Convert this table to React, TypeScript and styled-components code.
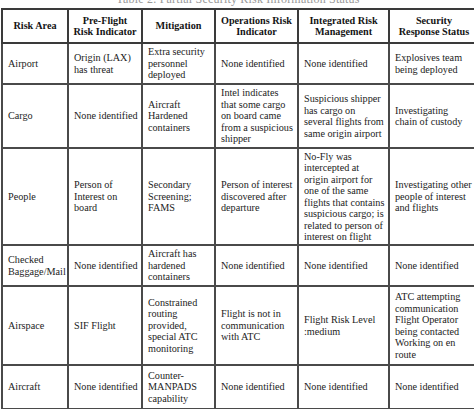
import React from 'react';
import styled, { createGlobalStyle } from 'styled-components';

const GlobalStyle = createGlobalStyle`
	html, body {
		margin: 0;
		padding: 0;
		background: #ffffff;
	}
	body {
		width: 474px;
		height: 409px;
		overflow: hidden;
		font-family: "Liberation Serif", "Times New Roman", serif;
		color: #1c1c1c;
	}
`;

interface Row {
	height: number;
	cells: string[][];
}

const headers: string[][] = [
	['Risk Area'],
	['Pre-Flight', 'Risk Indicator'],
	['Mitigation'],
	['Operations Risk', 'Indicator'],
	['Integrated Risk', 'Management'],
	['Security', 'Response Status'],
];

const widths = [66, 74, 73, 83, 91, 90];

const rows: Row[] = [
	{
		height: 41,
		cells: [
			['Airport'],
			['Origin (LAX)', 'has threat'],
			['Extra security', 'personnel', 'deployed'],
			['None identified'],
			['None identified'],
			['Explosives team', 'being deployed'],
		],
	},
	{
		height: 64,
		cells: [
			['Cargo'],
			['None identified'],
			['Aircraft', 'Hardened', 'containers'],
			['Intel indicates', 'that some cargo', 'on board came', 'from a suspicious', 'shipper'],
			['Suspicious shipper', 'has cargo on', 'several flights from', 'same origin airport'],
			['Investigating', 'chain of custody'],
		],
	},
	{
		height: 97,
		cells: [
			['People'],
			['Person of', 'Interest on', 'board'],
			['Secondary', 'Screening;', 'FAMS'],
			['Person of interest', 'discovered after', 'departure'],
			[
				'No-Fly was',
				'intercepted at',
				'origin airport for',
				'one of the same',
				'flights that contains',
				'suspicious cargo; is',
				'related to person of',
				'interest on flight',
			],
			['Investigating other', 'people of interest', 'and flights'],
		],
	},
	{
		height: 41,
		cells: [
			['Checked', 'Baggage/Mail'],
			['None identified'],
			['Aircraft has', 'hardened', 'containers'],
			['None identified'],
			['None identified'],
			['None identified'],
		],
	},
	{
		height: 79,
		cells: [
			['Airspace'],
			['SIF Flight'],
			['Constrained', 'routing', 'provided,', 'special ATC', 'monitoring'],
			['Flight is not in', 'communication', 'with ATC'],
			['Flight Risk Level', ':medium'],
			[
				'ATC attempting',
				'communication',
				'Flight Operator',
				'being contacted',
				'Working on en',
				'route',
			],
		],
	},
	{
		height: 44,
		cells: [
			['Aircraft'],
			['None identified'],
			['Counter-', 'MANPADS', 'capability'],
			['None identified'],
			['None identified'],
			['None identified'],
		],
	},
];

function Lines({ lines }: { lines: string[] }) {
	return (
		<>
			{ lines.map((line, i) => (
				<React.Fragment key={ i }>
					{ i > 0 && <br /> }
					{ line }
				</React.Fragment>
			)) }
		</>
	);
}

function App() {
	return (
		<>
			<GlobalStyle />
			<Page>
				<Caption>Table 2. Partial Security Risk Information Status</Caption>
				<Table>
					<colgroup>
						{ widths.map((w, i) => <col key={ i } style={ { width: w } } />) }
					</colgroup>
					<thead>
						<tr>
							{ headers.map((h, i) => (
								<HeadCell key={ i }>
									<Lines lines={ h } />
								</HeadCell>
							)) }
						</tr>
					</thead>
					<tbody>
						{ rows.map((row, r) => (
							<BodyRow key={ r } $height={ row.height }>
								{ row.cells.map((cell, c) => (
									<Cell key={ c }>
										<Lines lines={ cell } />
									</Cell>
								)) }
							</BodyRow>
						)) }
					</tbody>
				</Table>
			</Page>
		</>
	);
}

const Page = styled.div`
	padding-left: 1px;
	width: 490px;
`;

const Caption = styled.div`
	margin-top: -7px;
	height: 15px;
	width: 474px;
	text-align: center;
	font-size: 12px;
	line-height: 12px;
	color: #9a9a9a;
	letter-spacing: 0.2px;
`;

const Table = styled.table`
	border-collapse: collapse;
	table-layout: fixed;
	width: 477px;
	font-size: 10.2px;
	line-height: 11.5px;
`;

const HeadCell = styled.th`
	height: 32px;
	padding: 0 2px;
	border: 2px solid #3a3a3a;
	font-weight: bold;
	text-align: center;
	vertical-align: middle;
	white-space: nowrap;
	color: #141414;
`;

const BodyRow = styled.tr<{ $height: number }>`
	height: ${ (p) => p.$height }px;
`;

const Cell = styled.td`
	padding: 0 2px 0 5px;
	border: 2px solid #4a4a4a;
	text-align: left;
	vertical-align: middle;
	white-space: nowrap;
	overflow: hidden;
`;

export default App;
